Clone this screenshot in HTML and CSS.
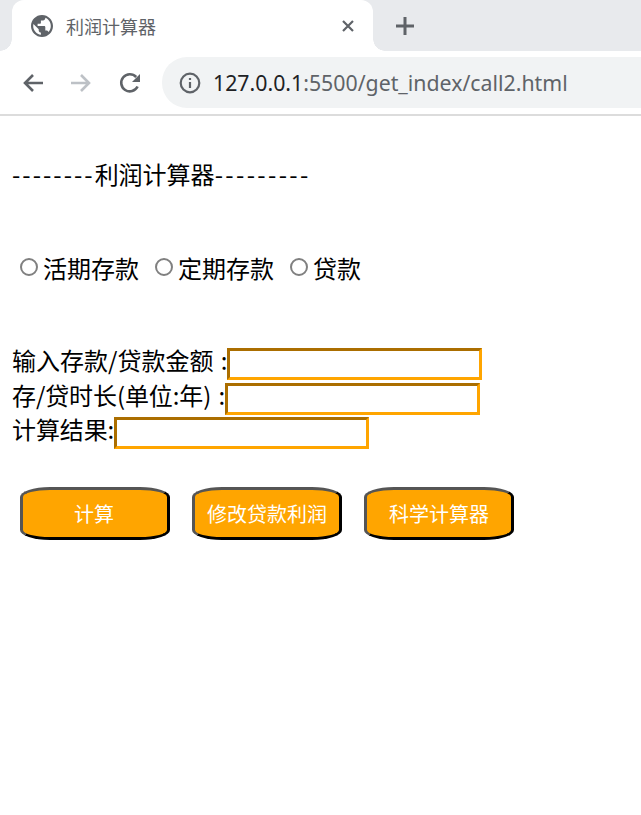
FILE: index.html
```html
<!DOCTYPE html>
<html lang="zh-CN">
  <head>
    <meta charset="UTF-8" />
    <meta name="viewport" content="width=device-width, initial-scale=1.0" />
    <title>利润计算器</title>
    <link rel="stylesheet" href="styles.css">
  </head>
  <body>
    <div class="tab-strip">
      <div class="tab">
        <svg class="tab-icon" viewBox="2 2 20 20"><path d="M12 2C6.48 2 2 6.48 2 12s4.48 10 10 10 10-4.48 10-10S17.52 2 12 2zm-1 17.93c-3.95-.49-7-3.85-7-7.93 0-.62.08-1.21.21-1.79L9 15v1c0 1.1.9 2 2 2v1.93zm6.9-2.54c-.26-.81-1-1.39-1.9-1.39h-1v-3c0-.55-.45-1-1-1H8v-2h2c.55 0 1-.45 1-1V7h2c1.1 0 2-.9 2-2v-.41c2.93 1.19 5 4.06 5 7.41 0 2.08-.8 3.97-2.1 5.39z"/></svg>
        <span class="tab-title">利润计算器</span>
        <svg class="tab-close" viewBox="0 0 12 12"><path d="M1 1l10 10M11 1L1 11"/></svg>
      </div>
      <svg class="new-tab" viewBox="0 0 18 18"><path d="M9 0v18M0 9h18"/></svg>
    </div>
    <div class="toolbar">
      <svg class="nav-icon" viewBox="0 0 20 18"><path d="M20 9H2M10 1L2 9l8 8"/></svg>
      <svg class="nav-icon nav-off" viewBox="0 0 20 18"><path d="M0 9h18M10 1l8 8-8 8"/></svg>
      <svg class="nav-icon nav-reload" viewBox="0 0 22 22"><path d="M18.6 14.5A8.6 8.6 0 1 1 17.2 5"/><path class="arrow-head" d="M21 2v8h-8z"/></svg>
      <div class="omnibox">
        <svg class="info-icon" viewBox="0 0 22 22"><circle cx="11" cy="11" r="9.3"/><path d="M11 10v6M11 6v2"/></svg>
        <span class="url"><b>127.0.0.1</b>:5500/get_index/call2.html</span>
      </div>
    </div>

    <div class="page">
      <p class="title"><span class="dashes">--------</span>利润计算器<span class="dashes dashes-end">---------</span></p>

      <div class="radio-row">
        <label class="radio"><input type="radio" name="kind" />活期存款</label>
        <label class="radio"><input type="radio" name="kind" />定期存款</label>
        <label class="radio"><input type="radio" name="kind" />贷款</label>
      </div>

      <div class="fields">
        <div class="field">输入存款/贷款金额 :<input type="text" class="box" /></div>
        <div class="field field-tight">存/贷时长(单位:年) :<input type="text" class="box" /></div>
        <div class="field field-tight">计算结果:<input type="text" class="box" /></div>
      </div>

      <div class="buttons">
        <button class="btn btn-short">计算</button>
        <button class="btn">修改贷款利润</button>
        <button class="btn">科学计算器</button>
      </div>
    </div>
  </body>
</html>
```

FILE: styles.css
```css
body {
  margin: 0;
  font-family: "Noto Sans CJK SC", "Liberation Sans", sans-serif;
  background-color: white;
  color: black;
  overflow: hidden;
}
.tab-strip {
  display: flex;
  align-items: center;
  height: 51px;
  padding-left: 12px;
  background-color: #e8eaed;
}
.tab {
  position: relative;
  display: flex;
  align-items: center;
  width: 361px;
  height: 51px;
  box-sizing: border-box;
  padding: 0 19px;
  background-color: white;
  border-radius: 12px 12px 0 0;
}
.tab::before,
.tab::after {
  content: "";
  position: absolute;
  bottom: 0;
  width: 12px;
  height: 12px;
}
.tab::before {
  left: -12px;
  background: radial-gradient(circle at 0 0, #e8eaed 11.5px, white 12px);
}
.tab::after {
  right: -12px;
  background: radial-gradient(circle at 100% 0, #e8eaed 11.5px, white 12px);
}
.tab-icon {
  width: 22px;
  height: 22px;
  fill: #5f6368;
}
.tab-title {
  margin-left: 13px;
  font-size: 18px;
  color: #5f6368;
}
.tab-close {
  width: 12px;
  height: 12px;
  margin-left: auto;
  fill: none;
  stroke: #5f6368;
  stroke-width: 2.2;
}
.new-tab {
  width: 18px;
  height: 18px;
  margin-left: 23px;
  fill: none;
  stroke: #5f6368;
  stroke-width: 3;
}
.toolbar {
  display: flex;
  align-items: center;
  height: 63px;
  padding-left: 23px;
  border-bottom: 2px solid #dcdcdc;
}
.nav-icon {
  width: 20px;
  height: 18px;
  margin-right: 28px;
  fill: none;
  stroke: #5f6368;
  stroke-width: 2.6;
  flex: none;
}
.nav-off {
  stroke: #bdc1c6;
}
.nav-reload {
  width: 22px;
  height: 22px;
  margin-right: 21px;
}
.arrow-head {
  fill: #5f6368;
  stroke: none;
}
.omnibox {
  display: flex;
  align-items: center;
  flex: 1;
  height: 51px;
  padding-left: 17px;
  background-color: #f1f3f4;
  border-radius: 25px 0 0 25px;
}
.info-icon {
  width: 22px;
  height: 22px;
  fill: none;
  stroke: #5f6368;
  stroke-width: 2.2;
}
.url {
  margin-left: 12px;
  font-family: "Noto Sans", "Liberation Sans", sans-serif;
  font-size: 21.3px;
  color: #5f6368;
  white-space: nowrap;
}
.url b {
  font-weight: normal;
  color: #202124;
}
.page {
  padding: 0 12px;
  font-size: 24px;
}
.title {
  margin: 0;
  padding-top: 40px;
  line-height: 36px;
}
.dashes {
  letter-spacing: 2px;
}
.dashes-end {
  letter-spacing: 2.35px;
}
.radio-row {
  display: flex;
  gap: 16px;
  margin-top: 58px;
  padding-left: 8px;
  line-height: 36px;
}
.radio {
  display: flex;
  align-items: center;
}
.radio input {
  appearance: none;
  width: 18px;
  height: 18px;
  margin: 0 5px 2px 0;
  background-color: white;
  border: 2px solid #808080;
  border-radius: 50%;
}
.fields {
  margin-top: 62px;
}
.field {
  display: flex;
  align-items: flex-start;
  height: 34.5px;
  line-height: 24px;
  word-spacing: 2px;
  white-space: nowrap;
}
.field-tight {
  letter-spacing: -0.1px;
}
.box {
  width: 255px;
  height: 32px;
  box-sizing: border-box;
  border: 3px inset orange;
  padding: 0;
  background-color: white;
}
.buttons {
  display: flex;
  gap: 22px;
  margin-top: 35px;
  padding-left: 8px;
}
.btn {
  width: 150px;
  height: 53px;
  padding: 0;
  font-family: inherit;
  font-size: 20px;
  color: white;
  background-color: orange;
  border: 3px solid;
  border-color: #555 black black #555;
  border-radius: 30px / 10px;
}
.btn-short {
  padding-right: 2px;
}
```
